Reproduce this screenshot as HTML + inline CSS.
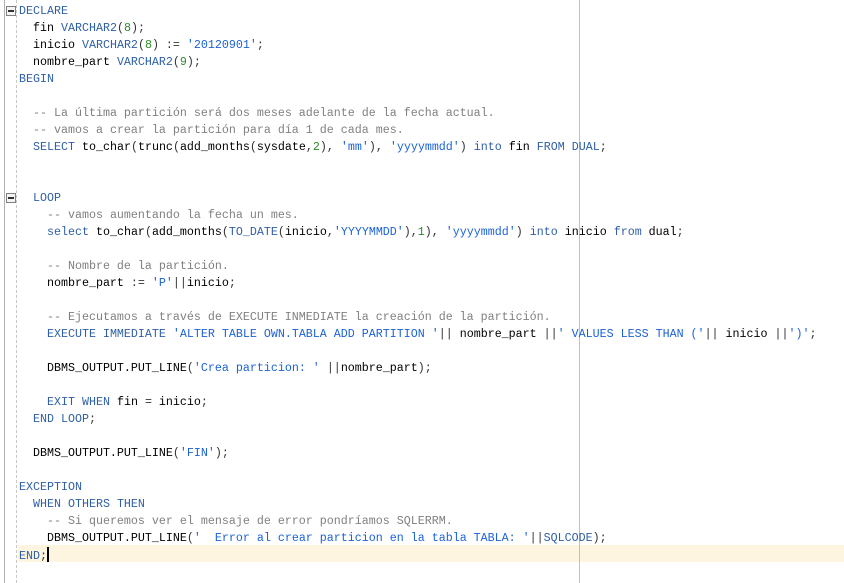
<!DOCTYPE html>
<html><head><meta charset="utf-8"><style>
html,body{margin:0;padding:0;background:#fff;width:844px;height:583px;overflow:hidden;position:relative}
.gut{position:absolute;left:4px;top:0;width:1px;height:583px;background:#b0b0b0}
.dash{position:absolute;left:16px;top:0;width:0;height:583px;border-left:1px dashed #c8c8c8}
.marg{position:absolute;left:579px;top:0;width:1px;height:583px;background:#c0c0c0}
.hl{position:absolute;left:18px;top:545px;width:826px;height:17px;background:#fdf5e0}
.fold{position:absolute;left:6px;width:8px;height:8px;border:1px solid #808080;background:#f4f4f4}
.fold:after{content:"";position:absolute;left:1px;top:3px;width:6px;height:2px;background:#303030}
pre{position:absolute;left:19px;top:3px;margin:0;font-family:"Liberation Mono",monospace;font-size:11.67px;line-height:17px;color:#000}
.k{color:#2f5fa5}.s{color:#1b62d6}.n{color:#2a8a2a}.c{color:#808080}.p{color:#333}
.cur{display:inline-block;width:2px;height:15px;background:#000;vertical-align:-3px}
</style></head><body>
<div class="hl"></div>
<div class="gut"></div><div class="dash"></div><div class="marg"></div>
<div class="fold" style="top:6px"></div>
<div class="fold" style="top:193px"></div>
<pre><span class="k">DECLARE</span>
  fin <span class="k">VARCHAR2</span><span class="p">(</span><span class="n">8</span><span class="p">);</span>
  inicio <span class="k">VARCHAR2</span><span class="p">(</span><span class="n">8</span><span class="p">) :=</span> <span class="s">'20120901'</span><span class="p">;</span>
  nombre_part <span class="k">VARCHAR2</span><span class="p">(</span><span class="n">9</span><span class="p">);</span>
<span class="k">BEGIN</span>

  <span class="c">-- La última partición será dos meses adelante de la fecha actual.</span>
  <span class="c">-- vamos a crear la partición para día 1 de cada mes.</span>
  <span class="k">SELECT</span> to_char<span class="p">(</span>trunc<span class="p">(</span>add_months<span class="p">(</span>sysdate<span class="p">,</span><span class="n">2</span><span class="p">),</span> <span class="s">'mm'</span><span class="p">),</span> <span class="s">'yyyymmdd'</span><span class="p">)</span> <span class="k">into</span> fin <span class="k">FROM</span> <span class="k">DUAL</span><span class="p">;</span>


  <span class="k">LOOP</span>
    <span class="c">-- vamos aumentando la fecha un mes.</span>
    <span class="k">select</span> to_char<span class="p">(</span>add_months<span class="p">(</span><span class="k">TO_DATE</span><span class="p">(</span>inicio<span class="p">,</span><span class="s">'YYYYMMDD'</span><span class="p">),</span><span class="n">1</span><span class="p">),</span> <span class="s">'yyyymmdd'</span><span class="p">)</span> <span class="k">into</span> inicio <span class="k">from</span> dual<span class="p">;</span>

    <span class="c">-- Nombre de la partición.</span>
    nombre_part <span class="p">:=</span> <span class="s">'P'</span><span class="p">||</span>inicio<span class="p">;</span>

    <span class="c">-- Ejecutamos a través de EXECUTE INMEDIATE la creación de la partición.</span>
    <span class="k">EXECUTE IMMEDIATE</span> <span class="s">'ALTER TABLE OWN.TABLA ADD PARTITION '</span><span class="p">||</span> nombre_part <span class="p">||</span><span class="s">' VALUES LESS THAN ('</span><span class="p">||</span> inicio <span class="p">||</span><span class="s">')'</span><span class="p">;</span>

    DBMS_OUTPUT.PUT_LINE<span class="p">(</span><span class="s">'Crea particion: '</span> <span class="p">||</span>nombre_part<span class="p">);</span>

    <span class="k">EXIT WHEN</span> fin <span class="p">=</span> inicio<span class="p">;</span>
  <span class="k">END LOOP</span><span class="p">;</span>

  DBMS_OUTPUT.PUT_LINE<span class="p">(</span><span class="s">'FIN'</span><span class="p">);</span>

<span class="k">EXCEPTION</span>
  <span class="k">WHEN OTHERS THEN</span>
    <span class="c">-- Si queremos ver el mensaje de error pondríamos SQLERRM.</span>
    DBMS_OUTPUT.PUT_LINE<span class="p">(</span><span class="s">'  Error al crear particion en la tabla TABLA: '</span><span class="p">||</span><span class="k">SQLCODE</span><span class="p">);</span>
<span class="k">END</span><span class="p">;</span><span class="cur"></span></pre>
</body></html>
